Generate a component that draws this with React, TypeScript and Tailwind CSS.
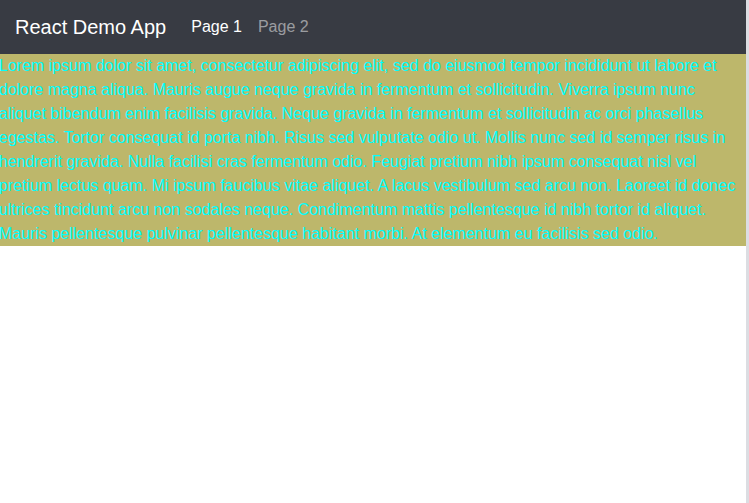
import React from "react";

const text =
  "Lorem ipsum dolor sit amet, consectetur adipiscing elit, sed do eiusmod tempor incididunt ut labore et dolore magna aliqua. Mauris augue neque gravida in fermentum et sollicitudin. Viverra ipsum nunc aliquet bibendum enim facilisis gravida. Neque gravida in fermentum et sollicitudin ac orci phasellus egestas. Tortor consequat id porta nibh. Risus sed vulputate odio ut. Mollis nunc sed id semper risus in hendrerit gravida. Nulla facilisi cras fermentum odio. Feugiat pretium nibh ipsum consequat nisl vel pretium lectus quam. Mi ipsum faucibus vitae aliquet. A lacus vestibulum sed arcu non. Laoreet id donec ultrices tincidunt arcu non sodales neque. Condimentum mattis pellentesque id nibh tortor id aliquet. Mauris pellentesque pulvinar pellentesque habitant morbi. At elementum eu facilisis sed odio.";

export default function App() {
  return (
    <div className="flex h-[503px] w-[749px] overflow-hidden bg-white font-['Liberation_Sans',Arial,sans-serif]">
      <div className="flex-1 min-w-0">
        <nav className="flex h-[54px] items-center bg-[#383b43] pl-[15px] pr-4 pb-px">
          <span className="mr-[17px] text-[20px] leading-[30px] text-white">React Demo App</span>
          <a className="px-2 text-[16px] leading-6 text-white">Page 1</a>
          <a className="px-2 text-[16px] leading-6 text-white/50">Page 2</a>
        </nav>
        <div className="overflow-hidden bg-[#bdb76b]">
          <div className="-ml-px mr-px text-[16px] leading-6 text-[#00ffff]">{text}</div>
        </div>
      </div>
      <div className="w-[3px] bg-[#dcdde2]" />
    </div>
  );
}
